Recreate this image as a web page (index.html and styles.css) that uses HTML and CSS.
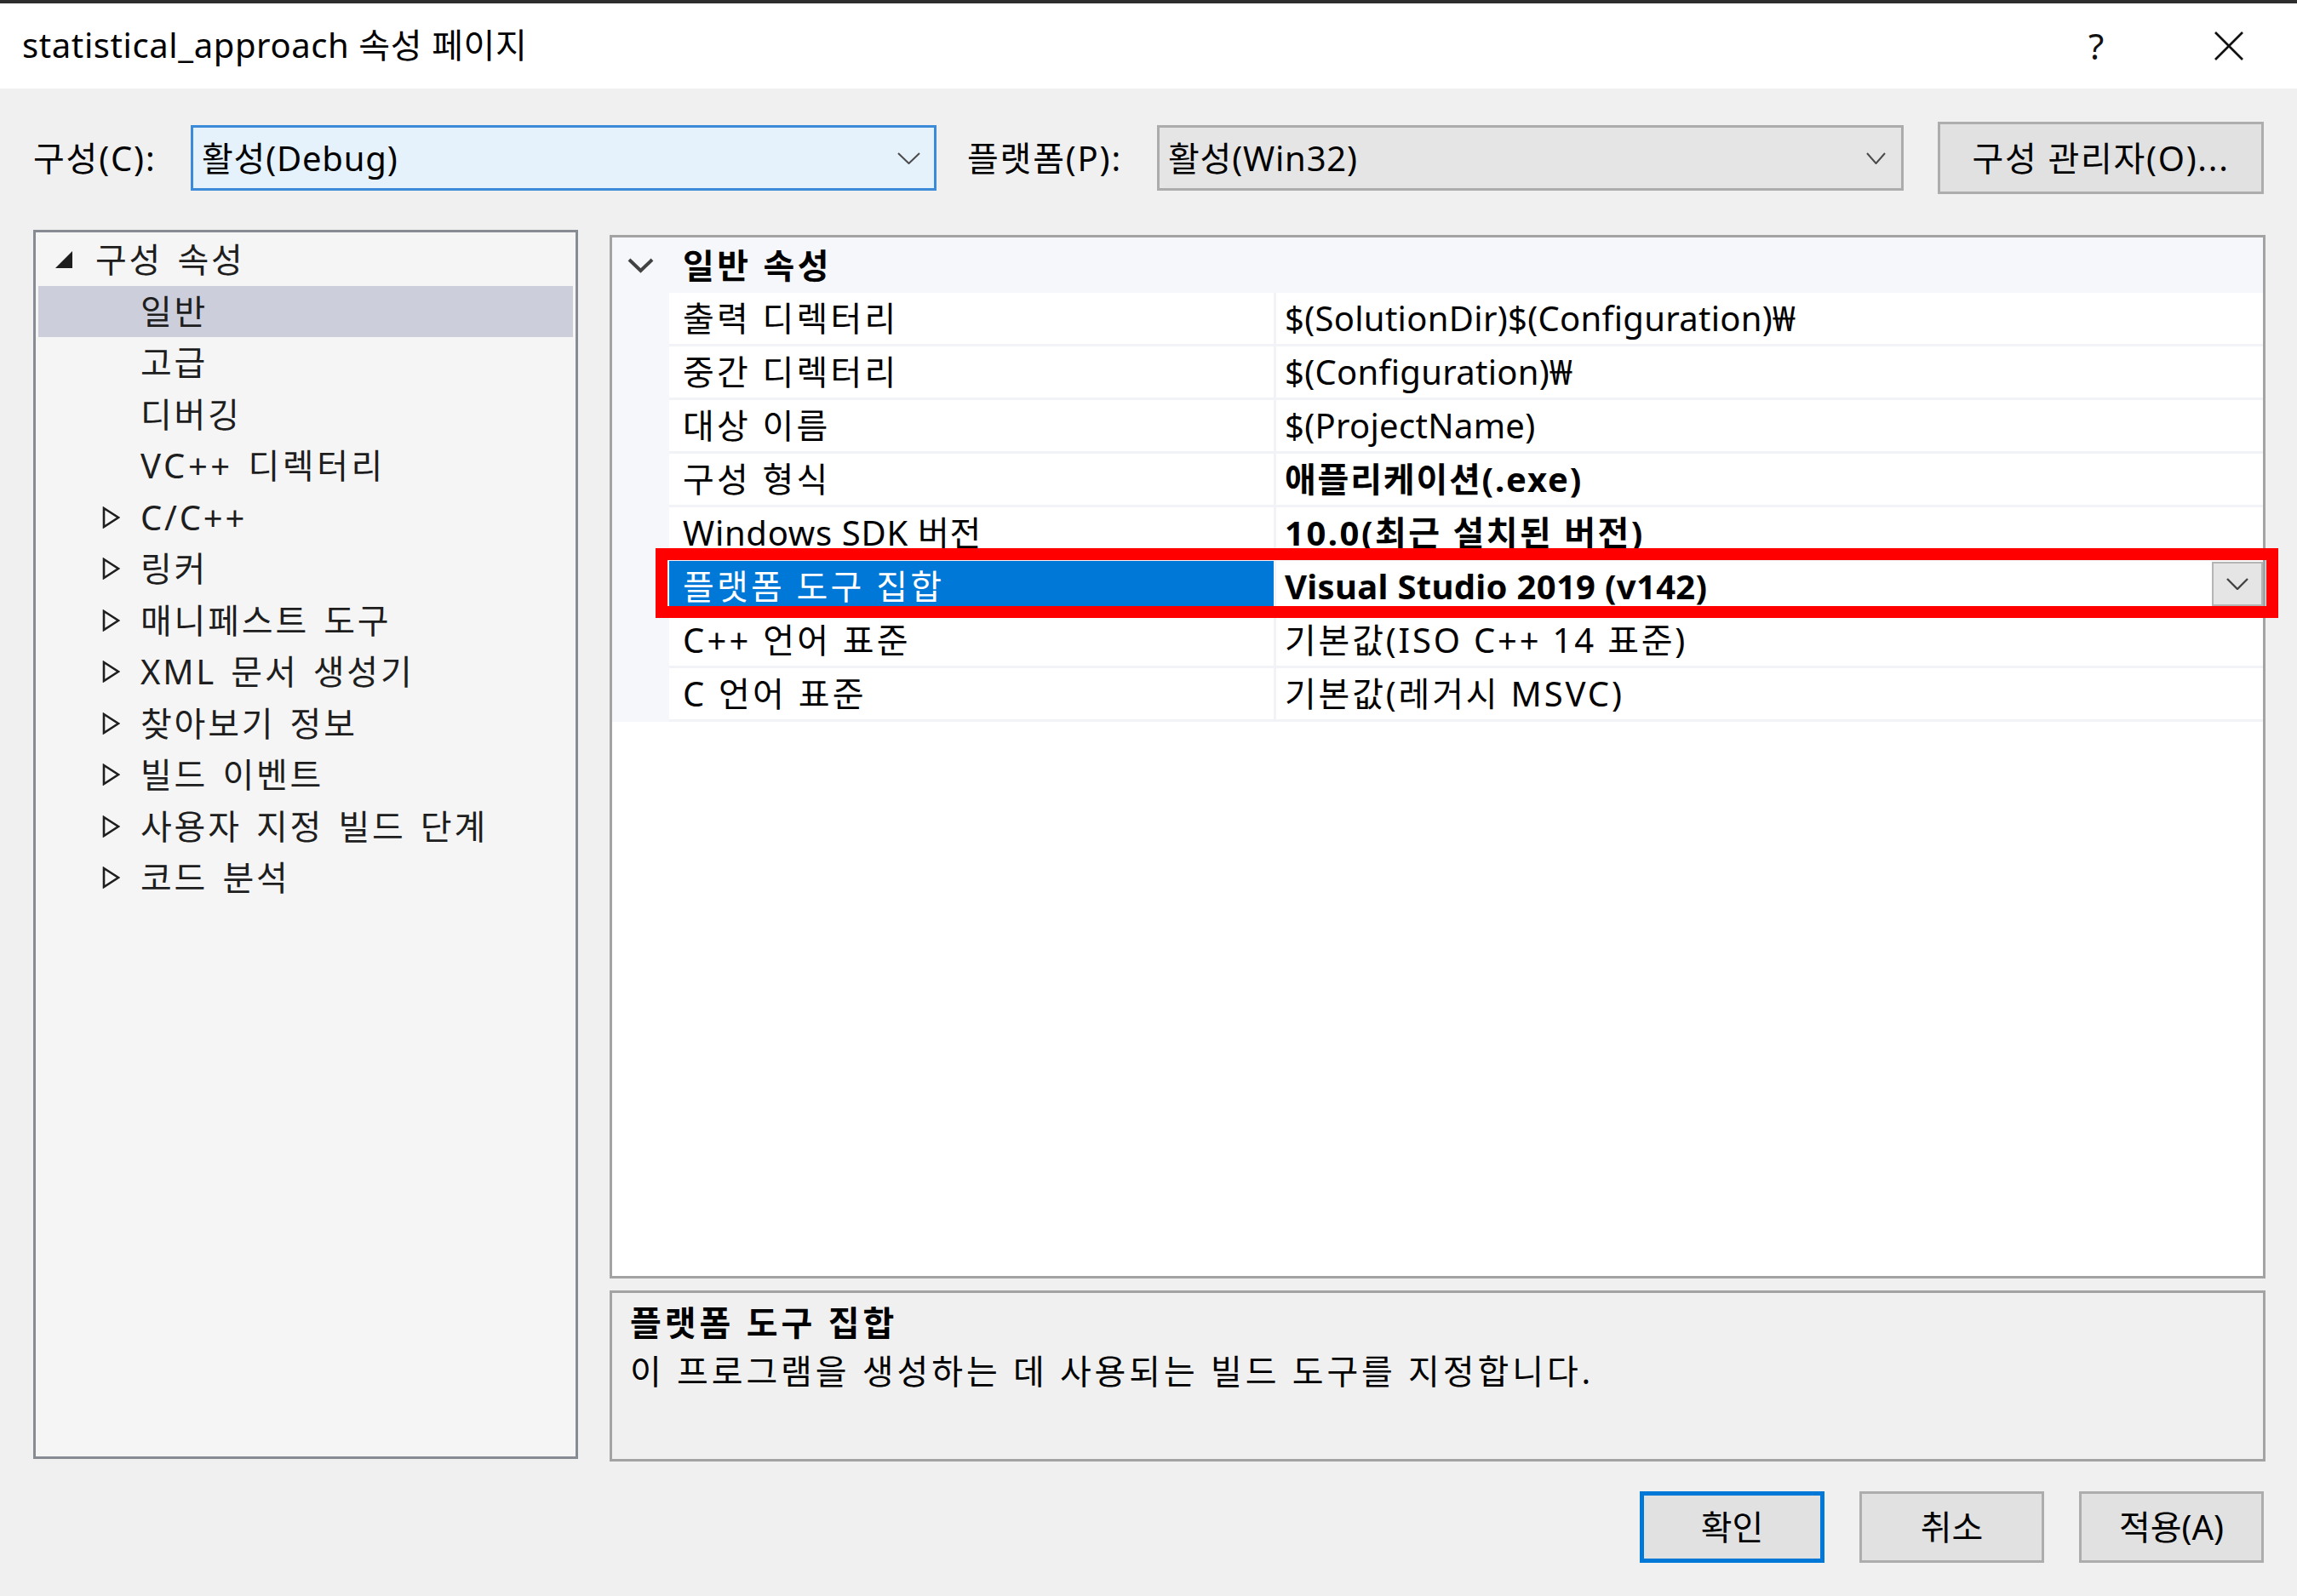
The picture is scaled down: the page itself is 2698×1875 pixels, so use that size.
FILE: index.html
```html
<!DOCTYPE html>
<html lang="ko">
<head>
    <meta charset="UTF-8">
    <title>statistical_approach 속성 페이지</title>
    <link rel="stylesheet" href="styles.css">
</head>
<body>
    <div class="dialog">
        <div class="titlebar">
            <div class="title">statistical_approach 속성 페이지</div>
            <span class="help">?</span>
            <svg class="close" width="34" height="34" viewBox="0 0 34 34">
                <line x1="1" y1="1" x2="33" y2="33" />
                <line x1="33" y1="1" x2="1" y2="33" />
            </svg>
        </div>

        <div class="toolbar">
            <span class="tb-label lbl-config">구성(C):</span>
            <div class="combo combo-config">
                <span>활성(Debug)</span>
                <svg class="chev" width="27" height="14" viewBox="0 0 27 14"><polyline points="1,1 13.5,13 26,1" /></svg>
            </div>
            <span class="tb-label lbl-platform">플랫폼(P):</span>
            <div class="combo combo-platform">
                <span>활성(Win32)</span>
                <svg class="chev" width="23" height="14" viewBox="0 0 23 14"><polyline points="1,1 11.5,13 22,1" /></svg>
            </div>
            <button class="btn btn-manager">구성 관리자(O)...</button>
        </div>

        <div class="main">
            <div class="tree">
                <div class="tree-row tree-root">
                    <span class="exp"><svg width="20" height="20" viewBox="0 0 20 20"><polygon points="20,0 20,20 0,20" fill="#1e1e1e" /></svg></span>
                    <span>구성 속성</span>
                </div>
                <div class="tree-row leaf selected"><span>일반</span></div>
                <div class="tree-row leaf"><span>고급</span></div>
                <div class="tree-row leaf"><span>디버깅</span></div>
                <div class="tree-row leaf"><span class="mixed">VC++ 디렉터리</span></div>
                <div class="tree-row node"><span class="exp"><svg width="21" height="26" viewBox="0 0 21 26"><polygon points="2,2 19,13 2,24" /></svg></span><span>C/C++</span></div>
                <div class="tree-row node"><span class="exp"><svg width="21" height="26" viewBox="0 0 21 26"><polygon points="2,2 19,13 2,24" /></svg></span><span>링커</span></div>
                <div class="tree-row node"><span class="exp"><svg width="21" height="26" viewBox="0 0 21 26"><polygon points="2,2 19,13 2,24" /></svg></span><span>매니페스트 도구</span></div>
                <div class="tree-row node"><span class="exp"><svg width="21" height="26" viewBox="0 0 21 26"><polygon points="2,2 19,13 2,24" /></svg></span><span>XML 문서 생성기</span></div>
                <div class="tree-row node"><span class="exp"><svg width="21" height="26" viewBox="0 0 21 26"><polygon points="2,2 19,13 2,24" /></svg></span><span>찾아보기 정보</span></div>
                <div class="tree-row node"><span class="exp"><svg width="21" height="26" viewBox="0 0 21 26"><polygon points="2,2 19,13 2,24" /></svg></span><span>빌드 이벤트</span></div>
                <div class="tree-row node"><span class="exp"><svg width="21" height="26" viewBox="0 0 21 26"><polygon points="2,2 19,13 2,24" /></svg></span><span>사용자 지정 빌드 단계</span></div>
                <div class="tree-row node"><span class="exp"><svg width="21" height="26" viewBox="0 0 21 26"><polygon points="2,2 19,13 2,24" /></svg></span><span>코드 분석</span></div>
            </div>

            <div class="right">
                <div class="props">
                    <div class="props-header">
                        <svg class="group-chev" width="31" height="18" viewBox="0 0 31 18"><polyline points="2,2 15.5,15 29,2" /></svg>
                        <span>일반 속성</span>
                    </div>
                    <div class="prop-row">
                        <div class="gutter"></div>
                        <div class="prop-name">출력 디렉터리</div>
                        <div class="prop-value">$(SolutionDir)$(Configuration)₩</div>
                    </div>
                    <div class="prop-row">
                        <div class="gutter"></div>
                        <div class="prop-name">중간 디렉터리</div>
                        <div class="prop-value">$(Configuration)₩</div>
                    </div>
                    <div class="prop-row">
                        <div class="gutter"></div>
                        <div class="prop-name">대상 이름</div>
                        <div class="prop-value">$(ProjectName)</div>
                    </div>
                    <div class="prop-row">
                        <div class="gutter"></div>
                        <div class="prop-name">구성 형식</div>
                        <div class="prop-value bold ko">애플리케이션(.exe)</div>
                    </div>
                    <div class="prop-row">
                        <div class="gutter"></div>
                        <div class="prop-name latin">Windows SDK 버전</div>
                        <div class="prop-value bold ko sdk">10.0(최근 설치된 버전)</div>
                    </div>
                    <div class="prop-row active">
                        <div class="gutter"></div>
                        <div class="prop-name">플랫폼 도구 집합</div>
                        <div class="prop-value bold">
                            Visual Studio 2019 (v142)
                            <span class="drop-btn"><svg width="26" height="14" viewBox="0 0 26 14"><polyline points="1,1 13,13 25,1" /></svg></span>
                        </div>
                        <div class="highlight-box"></div>
                    </div>
                    <div class="prop-row">
                        <div class="gutter"></div>
                        <div class="prop-name">C++ 언어 표준</div>
                        <div class="prop-value ko">기본값(ISO C++ 14 표준)</div>
                    </div>
                    <div class="prop-row">
                        <div class="gutter"></div>
                        <div class="prop-name">C 언어 표준</div>
                        <div class="prop-value ko">기본값(레거시 MSVC)</div>
                    </div>
                </div>

                <div class="desc">
                    <div class="desc-title">플랫폼 도구 집합</div>
                    <div class="desc-text">이 프로그램을 생성하는 데 사용되는 빌드 도구를 지정합니다.</div>
                </div>
            </div>
        </div>

        <div class="footer">
            <button class="btn btn-footer btn-default">확인</button>
            <button class="btn btn-footer">취소</button>
            <button class="btn btn-footer">적용(A)</button>
        </div>
    </div>
</body>
</html>
```

FILE: styles.css
```css
* {
    margin: 0;
    padding: 0;
    box-sizing: border-box;
}

body {
    width: 2698px;
    height: 1875px;
    overflow: hidden;
    background: #f0f0f0;
    font-family: "Noto Sans", "Noto Sans CJK KR", sans-serif;
    font-size: 40px;
    color: #000;
}

.dialog {
    display: flex;
    flex-direction: column;
    height: 1875px;
}

/* title bar */
.titlebar {
    height: 104px;
    border-top: 4px solid #2d2d2d;
    background: #fff;
    display: flex;
    align-items: center;
    padding: 0 63px 0 26px;
}

.title {
    flex: 1;
    line-height: 1;
    padding-bottom: 2px;
    letter-spacing: 0.6px;
}

.help {
    width: 40px;
    text-align: center;
    font-size: 42px;
    line-height: 1;
    color: #111;
}

.close {
    margin-left: 119px;
}

.close line {
    stroke: #111;
    stroke-width: 2.6;
}

/* configuration bar */
.toolbar {
    display: flex;
    align-items: center;
    padding: 39px 39px 0;
}

.tb-label {
    line-height: 1;
    white-space: nowrap;
    letter-spacing: 1.8px;
}

.lbl-config {
    width: 185px;
}

.lbl-platform {
    width: 223px;
    margin-left: 36px;
}

.combo {
    height: 77px;
    display: flex;
    align-items: center;
    justify-content: space-between;
    padding: 0 16px 0 10px;
    border: 3px solid #acacac;
    background: #e5e5e5;
    line-height: 1;
    letter-spacing: 0.8px;
}

.combo-config {
    width: 876px;
    border-color: #3b8bd8;
    background: #e5f1fb;
}

.combo-platform {
    width: 877px;
    padding-right: 18px;
}

.chev polyline {
    fill: none;
    stroke: #4a4a4a;
    stroke-width: 2;
}

.btn {
    background: #e1e1e1;
    border: 3px solid #adadad;
    font-family: inherit;
    font-size: 40px;
    color: #000;
    line-height: 1;
}

.btn-manager {
    width: 383px;
    height: 85px;
    margin-left: 40px;
    letter-spacing: 1.7px;
}

/* main area */
.main {
    display: flex;
    gap: 37px;
    padding: 0 37px 0 39px;
    margin-top: 42px;
}

.tree {
    width: 640px;
    height: 1444px;
    border: 3px solid #878b93;
    background: #f5f5f5;
    padding: 2px 3px;
    color: #1e1e1e;
}

.tree-row {
    height: 60.5px;
    display: flex;
    align-items: center;
    line-height: 1;
    letter-spacing: 2.8px;
    word-spacing: 4px;
    white-space: nowrap;
}

.tree-row .mixed {
    letter-spacing: 3.5px;
}

.tree-row .exp {
    display: flex;
    align-items: center;
}

.tree-root {
    padding-left: 20px;
}

.tree-root .exp {
    width: 47px;
}

.leaf {
    padding-left: 120px;
}

.node {
    padding-left: 75px;
}

.node .exp {
    width: 45px;
}

.node .exp polygon {
    fill: none;
    stroke: #1e1e1e;
    stroke-width: 2.6;
    stroke-linejoin: miter;
}

.tree-row.selected {
    background: #cccedb;
}

.right {
    width: 1945px;
    display: flex;
    flex-direction: column;
    gap: 14px;
    padding-top: 6px;
}

/* property grid */
.props {
    height: 1226px;
    border: 3px solid #a3a3a3;
    background: #fff;
}

.props-header {
    height: 65px;
    display: flex;
    align-items: center;
    padding-left: 18px;
    background: #f5f7fa;
    font-weight: 700;
    line-height: 1;
    letter-spacing: 3.5px;
}

.group-chev {
    margin-right: 34px;
}

.group-chev polyline {
    fill: none;
    stroke: #424242;
    stroke-width: 4;
}

.prop-row {
    height: 63px;
    display: flex;
    line-height: 1;
    white-space: nowrap;
}

.gutter {
    width: 67px;
    background: #f5f7fa;
}

.prop-name {
    width: 713px;
    padding-left: 16px;
    display: flex;
    align-items: center;
    border-right: 3px solid #f1f3f6;
    border-bottom: 3px solid #f1f3f6;
    letter-spacing: 3.2px;
}

.prop-name.latin {
    letter-spacing: 0.7px;
}

.prop-value {
    flex: 1;
    padding-left: 10px;
    display: flex;
    align-items: center;
    border-bottom: 3px solid #f1f3f6;
    letter-spacing: 0.3px;
}

.prop-value.ko {
    letter-spacing: 2.8px;
}

.prop-value.bold.ko {
    letter-spacing: 1.8px;
}

.prop-value.bold.sdk {
    letter-spacing: 2.5px;
}

.bold {
    font-weight: 700;
}

.prop-row.active {
    position: relative;
}

.prop-row.active .prop-name {
    background: #0078d7;
    color: #fff;
}

.drop-btn {
    margin-left: auto;
    align-self: flex-start;
    margin-top: 1px;
    width: 60px;
    height: 52px;
    background: #e5e5e5;
    border: 2px solid #b4b4b4;
    display: flex;
    align-items: center;
    justify-content: center;
}

.drop-btn polyline {
    fill: none;
    stroke: #444;
    stroke-width: 2.4;
}

.highlight-box {
    position: absolute;
    left: 51px;
    right: -18px;
    top: -15px;
    bottom: -4px;
    border: 14px solid #ff0000;
    z-index: 2;
    pointer-events: none;
}

/* description */
.desc {
    height: 201px;
    border: 3px solid #a3a3a3;
    background: #f0f0f0;
    padding: 6px 21px 0;
    line-height: 57px;
}

.desc-title {
    font-weight: 700;
    letter-spacing: 4px;
}

.desc-text {
    letter-spacing: 3.9px;
}

/* bottom buttons */
.footer {
    display: flex;
    justify-content: flex-end;
    gap: 41px;
    padding: 35px 39px 0;
}

.btn-footer {
    width: 217px;
    height: 84px;
}

.btn-default {
    border: 5px solid #0078d7;
}
```
